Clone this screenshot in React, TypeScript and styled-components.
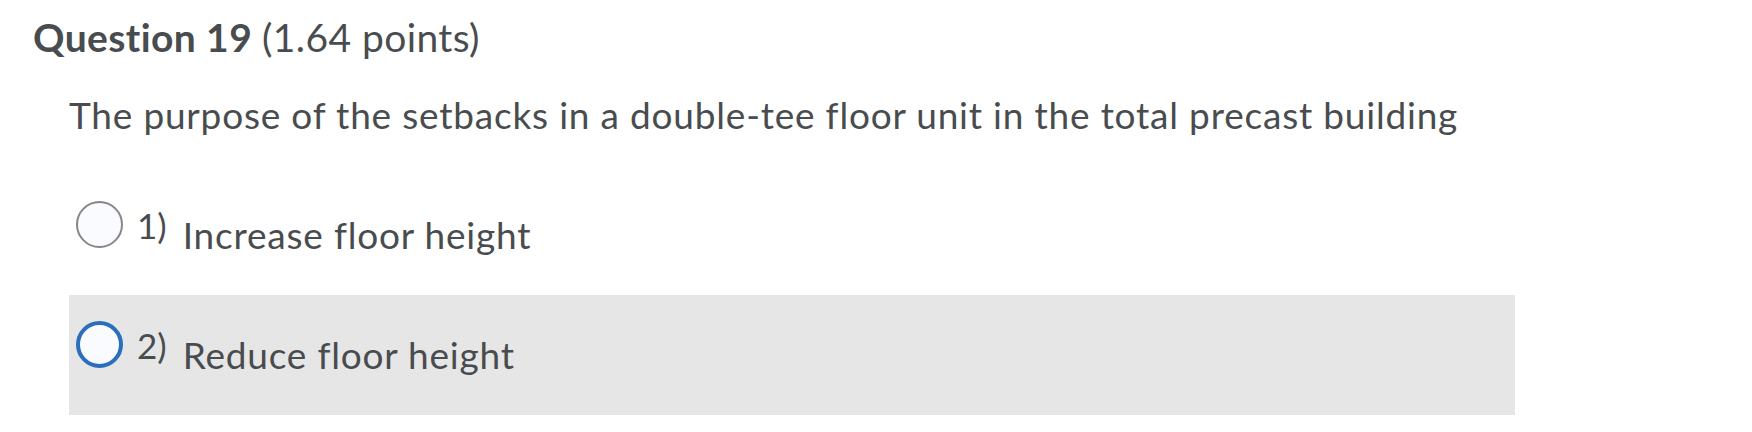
import React from 'react';
import styled, { createGlobalStyle } from 'styled-components';

const GlobalStyle = createGlobalStyle`
  html, body {
    margin: 0;
    padding: 0;
    background: #ffffff;
  }
  body {
    font-family: Lato, 'Open Sans', sans-serif;
    color: #494c4e;
  }
`;

const Page = styled.div`
  width: 1752px;
  height: 432px;
  box-sizing: border-box;
  padding: 14px 0 0 33px;
  overflow: hidden;
`;

const Heading = styled.h2`
  margin: 0;
  font-size: 39px;
  line-height: 1.2;
  font-weight: 700;
  letter-spacing: 0.4px;
  color: #494c4e;
`;

const Points = styled.span`
  font-weight: 400;
`;

const Body = styled.div`
  padding-left: 36px;
`;

const Prompt = styled.p`
  margin: 32px 0 38px;
  font-size: 37px;
  line-height: 1.2;
  letter-spacing: 0.8px;
`;

const Options = styled.div`
  display: flex;
  flex-direction: column;
  width: 1446px;
`;

const Row = styled.label<{ $hover?: boolean }>`
  display: flex;
  align-items: flex-start;
  height: 120px;
  box-sizing: border-box;
  padding: 26px 0 0 7px;
  background: ${(p) => (p.$hover ? '#e6e6e6' : 'transparent')};
  cursor: pointer;
`;

const Radio = styled.span<{ $focus?: boolean }>`
  flex: none;
  width: 47px;
  height: 47px;
  box-sizing: border-box;
  border-radius: 50%;
  background: #f9fbff;
  border: ${(p) => (p.$focus ? '4px solid #2a6fbc' : '2px solid #868686')};
`;

const Num = styled.span`
  margin: 1px 0 0 14px;
  font-size: 35px;
  line-height: 47px;
`;

const Answer = styled.span`
  margin: 12px 0 0 16px;
  font-size: 37px;
  line-height: 1.2;
  letter-spacing: 0.8px;
`;

const options = [
  { n: '1)', text: 'Increase floor height', active: false },
  { n: '2)', text: 'Reduce floor height', active: true },
];

export default function App() {
  return (
    <Page>
      <GlobalStyle />
      <Heading>
        Question 19 <Points>(1.64 points)</Points>
      </Heading>
      <Body>
        <Prompt>
          The purpose of the setbacks in a double-tee floor unit in the total precast building
        </Prompt>
        <Options>
          {options.map((o) => (
            <Row key={o.n} $hover={o.active}>
              <Radio $focus={o.active} />
              <Num>{o.n}</Num>
              <Answer>{o.text}</Answer>
            </Row>
          ))}
        </Options>
      </Body>
    </Page>
  );
}
